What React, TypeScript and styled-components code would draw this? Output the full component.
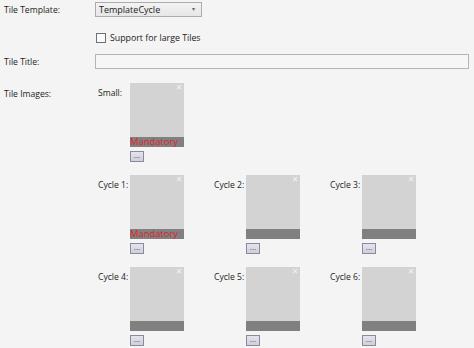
import React from 'react';
import styled, { createGlobalStyle } from 'styled-components';

const GlobalStyle = createGlobalStyle`
	body {
		margin: 0;
		background: #f4f4f4;
		font-family: 'Open Sans', 'Noto Sans', sans-serif;
		font-size: 8.6px;
		color: #222;
	}
`;

const Page = styled.div`
	width: 474px;
	height: 348px;
	padding: 2px 5px 0 4px;
	box-sizing: border-box;
	overflow: hidden;
`;

const FormRow = styled.div<{ $height: number }>`
	display: flex;
	align-items: flex-start;
	height: ${p => p.$height}px;
`;

const Label = styled.div<{ $top?: number }>`
	width: 91px;
	flex: none;
	padding-top: ${p => p.$top ?? 0}px;
	line-height: 14px;
`;

const Field = styled.div`
	flex: 1;
	display: flex;
	flex-direction: column;
`;

const Select = styled.div`
	width: 107px;
	height: 15px;
	box-sizing: border-box;
	border: 1px solid #acacac;
	background: linear-gradient(#f3f3f3, #e6e6e6);
	display: flex;
	align-items: center;
	justify-content: space-between;
	padding: 0 6px 0 3px;
	line-height: 13px;
	font-size: 9px;
`;

const Caret = styled.span`
	font-size: 6px;
	color: #666;
`;

const CheckRow = styled.label`
	display: flex;
	align-items: center;
	gap: 4px;
	margin-left: 1px;
	line-height: 14px;
	font-size: 8.8px;
`;

const Box = styled.span`
	width: 8px;
	height: 8px;
	border: 1px solid #707070;
	background: #fbfbfb;
`;

const TextInput = styled.div`
	height: 15px;
	box-sizing: border-box;
	border: 1px solid #b4b4b4;
	background: #f6f6f6;
`;

const Grid = styled.div`
	display: grid;
	grid-template-columns: repeat(3, 116px);
	row-gap: 13px;
	margin-left: 3px;
`;

const Cell = styled.div`
	display: flex;
	align-items: flex-start;
`;

const CellLabel = styled.div`
	width: 32px;
	flex: none;
	padding-top: 3px;
	line-height: 14px;
	white-space: nowrap;
`;

const TileColumn = styled.div`
	display: flex;
	flex-direction: column;
	gap: 4px;
`;

const Tile = styled.div`
	position: relative;
	width: 54px;
	height: 64px;
	background: #d3d3d3;
	display: flex;
	flex-direction: column;
	justify-content: flex-end;
`;

const Close = styled.span`
	position: absolute;
	top: 0;
	right: 2px;
	color: #f4f4f4;
	font-size: 10px;
	line-height: 9px;
`;

const Bar = styled.div`
	height: 10px;
	background: #808080;
	color: #e2202a;
	font-size: 9.4px;
	line-height: 10px;
	white-space: nowrap;
`;

const Browse = styled.div`
	width: 14px;
	height: 11px;
	box-sizing: border-box;
	border: 1px solid #8a8a9a;
	background: linear-gradient(#e4e4ee, #cfcfdc);
	font-size: 8px;
	line-height: 6px;
	text-align: center;
	color: #444;
`;

interface ITileProps {
	label: string;
	mandatory?: boolean;
}

const TileSlot: React.FC<ITileProps> = ({ label, mandatory }) => (
	<Cell>
		<CellLabel>{label}</CellLabel>
		<TileColumn>
			<Tile>
				<Close>×</Close>
				<Bar>{mandatory ? 'Mandatory' : ''}</Bar>
			</Tile>
			<Browse>...</Browse>
		</TileColumn>
	</Cell>
);

const App: React.FC = () => (
	<Page>
		<GlobalStyle />
		<FormRow $height={29}>
			<Label $top={1}>Tile Template:</Label>
			<Field>
				<Select>
					TemplateCycle
					<Caret>▾</Caret>
				</Select>
			</Field>
		</FormRow>
		<FormRow $height={23}>
			<Label />
			<Field>
				<CheckRow>
					<Box />
					Support for large Tiles
				</CheckRow>
			</Field>
		</FormRow>
		<FormRow $height={29}>
			<Label $top={1}>Tile Title:</Label>
			<Field>
				<TextInput />
			</Field>
		</FormRow>
		<FormRow $height={265}>
			<Label $top={4}>Tile Images:</Label>
			<Field>
				<Grid>
					<TileSlot label="Small:" mandatory />
					<div />
					<div />
					<TileSlot label="Cycle 1:" mandatory />
					<TileSlot label="Cycle 2:" />
					<TileSlot label="Cycle 3:" />
					<TileSlot label="Cycle 4:" />
					<TileSlot label="Cycle 5:" />
					<TileSlot label="Cycle 6:" />
				</Grid>
			</Field>
		</FormRow>
	</Page>
);

export default App;
